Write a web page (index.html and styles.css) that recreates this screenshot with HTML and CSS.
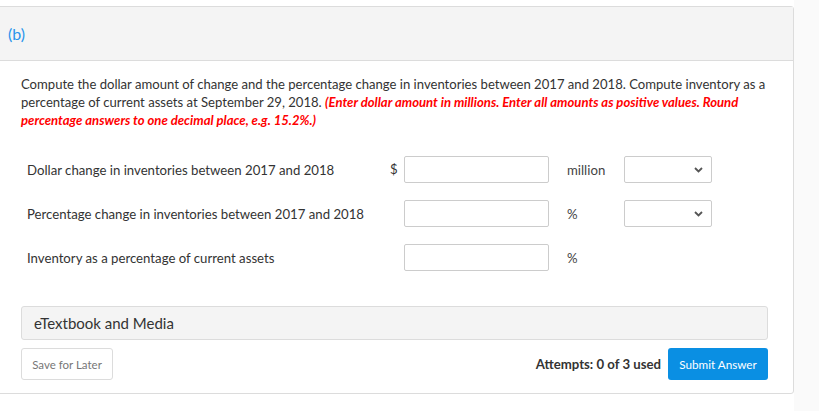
FILE: index.html
```html
<!DOCTYPE html>
<html>
<head>
<meta charset="utf-8">
<link rel="stylesheet" href="styles.css">
</head>
<body>
<div class="page">
  <div class="card">
    <div class="card-head">(b)</div>
    <div class="card-body">
      <p class="question">Compute the dollar amount of change and the percentage change in inventories between 2017 and 2018. Compute inventory as a percentage of current assets at September 29, 2018. <em class="hint">(Enter dollar amount in millions. Enter all amounts as positive values. Round percentage answers to one decimal place, e.g. 15.2%.)</em></p>
      <div class="rows">
        <div class="row">
          <span class="label">Dollar change in inventories between 2017 and 2018</span>
          <span class="prefix">$</span>
          <input class="field" type="text">
          <span class="unit">million</span>
          <div class="select"><svg width="9" height="6" viewBox="0 0 9 6"><path d="M1 1l3.5 3.5L8 1" fill="none" stroke="#555" stroke-width="1.8"/></svg></div>
        </div>
        <div class="row">
          <span class="label">Percentage change in inventories between 2017 and 2018</span>
          <span class="prefix"></span>
          <input class="field" type="text">
          <span class="unit">%</span>
          <div class="select"><svg width="9" height="6" viewBox="0 0 9 6"><path d="M1 1l3.5 3.5L8 1" fill="none" stroke="#555" stroke-width="1.8"/></svg></div>
        </div>
        <div class="row">
          <span class="label">Inventory as a percentage of current assets</span>
          <span class="prefix"></span>
          <input class="field" type="text">
          <span class="unit">%</span>
        </div>
      </div>
      <div class="media">eTextbook and Media</div>
      <div class="actions">
        <button class="save">Save for Later</button>
        <div class="right">
          <span class="attempts">Attempts: 0 of 3 used</span>
          <button class="submit">Submit Answer</button>
        </div>
      </div>
    </div>
  </div>
  <div class="side"></div>
</div>
</body>
</html>
```

FILE: styles.css
```css
html, body {
  margin: 0;
  padding: 0;
  background: #ffffff;
  font-family: Lato, "Open Sans", sans-serif;
  color: #333333;
}
.page {
  display: flex;
  height: 411px;
  overflow: hidden;
}
.card {
  flex: 0 0 auto;
  width: 795px;
  margin-left: -1px;
  margin-top: 6px;
  height: 388px;
  border: 1px solid #dcdcdc;
  border-radius: 0 3px 3px 0;
  background: #fff;
  box-sizing: border-box;
}
.side {
  flex: 1;
  background: #fafafa;
}
.card-head {
  height: 53px;
  background: #f4f4f4;
  border-bottom: 1px solid #dcdcdc;
  padding-left: 8px;
  display: flex;
  align-items: center;
  font-size: 16px;
  color: #2a95ec;
}
.card-body {
  padding: 14px 25px 0 21px;
}
.question {
  margin: 0;
  font-size: 13.1px;
  line-height: 18px;
  color: #333;
}
.hint {
  color: #ff0000;
  font-weight: bold;
  font-style: italic;
}
.rows {
  margin-top: 27px;
  display: flex;
  flex-direction: column;
  gap: 17px;
}
.row {
  display: flex;
  align-items: center;
  height: 27px;
  padding-left: 6px;
  font-size: 13.2px;
}
.label {
  width: 363px;
}
.prefix {
  width: 14px;
  margin-top: -2px;
}
.field {
  width: 145px;
  height: 27px;
  box-sizing: border-box;
  border: 1px solid #cccccc;
  border-radius: 2px;
  margin: 0;
  padding: 0;
  font: inherit;
}
.unit {
  width: 57px;
  padding-left: 18px;
  color: #444;
}
.select {
  width: 88px;
  height: 27px;
  box-sizing: border-box;
  border: 1px solid #cccccc;
  border-radius: 2px;
  display: flex;
  align-items: center;
  justify-content: flex-end;
  padding-right: 8px;
}
.media {
  margin-top: 35px;
  height: 34px;
  box-sizing: border-box;
  background: #f4f4f4;
  border: 1px solid #dcdcdc;
  border-radius: 3px;
  padding-left: 12px;
  display: flex;
  align-items: center;
  font-size: 15px;
  color: #333;
}
.actions {
  margin-top: 8px;
  display: flex;
  justify-content: space-between;
  align-items: center;
}
.save {
  width: 92px;
  height: 32px;
  box-sizing: border-box;
  background: #fff;
  border: 1px solid #dcdcdc;
  border-radius: 3px;
  font-family: Lato, sans-serif;
  font-size: 11.5px;
  color: #777;
  padding: 0;
}
.right {
  display: flex;
  align-items: center;
  gap: 7px;
}
.attempts {
  font-size: 13.2px;
  font-weight: bold;
  color: #333;
}
.submit {
  width: 100px;
  height: 32px;
  box-sizing: border-box;
  background: #0a8fe3;
  border: none;
  border-radius: 3px;
  font-family: Lato, sans-serif;
  font-size: 11.7px;
  color: #fff;
  padding: 0;
}
```
